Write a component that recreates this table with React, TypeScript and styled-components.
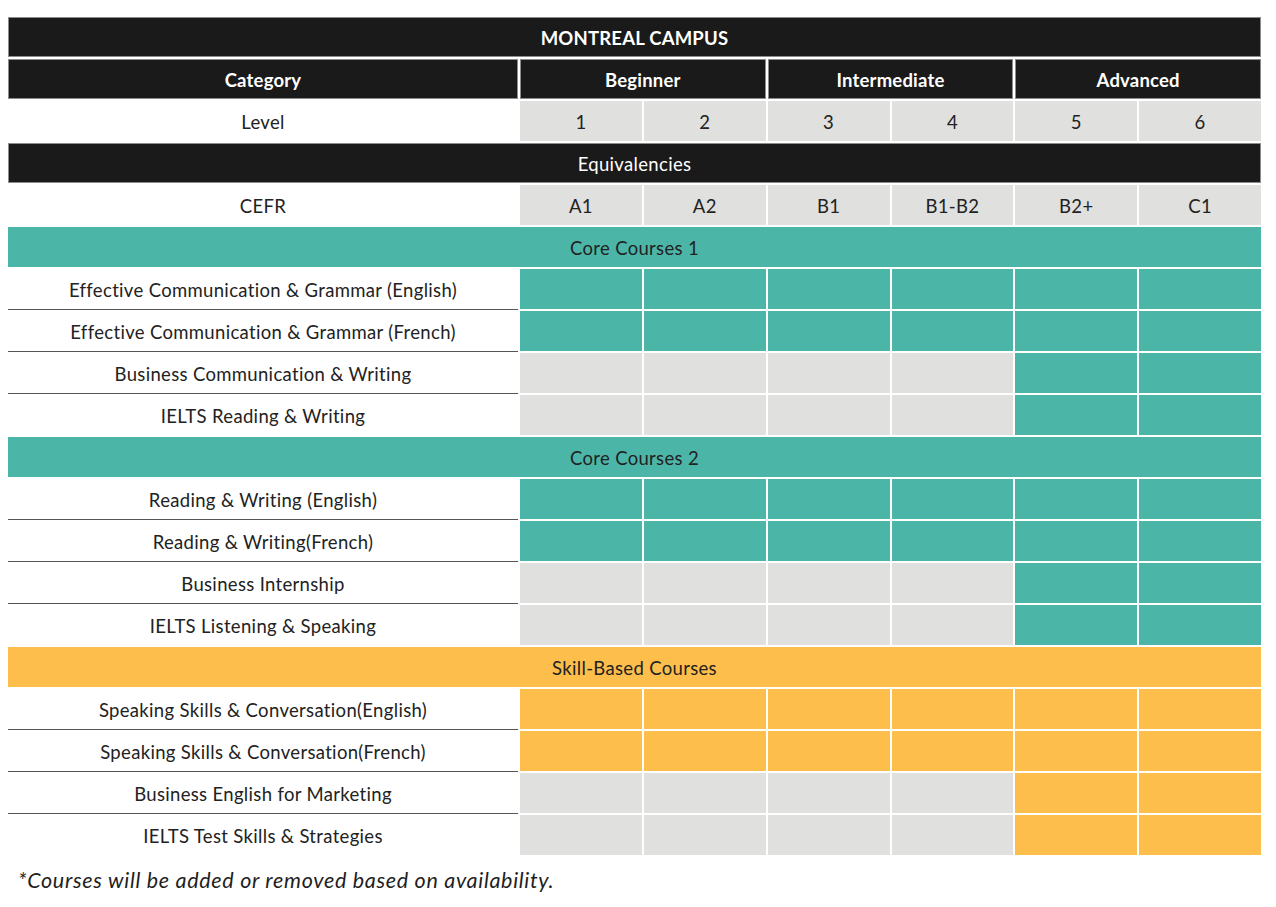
import React from 'react';
import styled, { createGlobalStyle } from 'styled-components';

const GlobalStyle = createGlobalStyle`
  html, body {
    margin: 0;
    padding: 0;
    background: #ffffff;
  }
  body {
    font-family: 'Lato', 'Open Sans', sans-serif;
    color: #222222;
  }
`;

type Tone = 'teal' | 'yellow' | 'gray';

const toneColors: Record<Tone, string> = {
  teal: '#4bb6a8',
  yellow: '#fdbe4c',
  gray: '#e0e0de',
};

const Page = styled.div`
  padding: 17px 15px 0 8px;
`;

const Table = styled.div`
  display: grid;
  grid-template-columns: 510px repeat(6, 1fr);
  grid-auto-rows: 40px;
  gap: 2px;
`;

const Cell = styled.div<{ $span?: number }>`
  grid-column: span ${(p) => p.$span || 1};
  display: flex;
  align-items: center;
  justify-content: center;
  padding-top: 1px;
  font-size: 18.5px;
  letter-spacing: 0.33px;
  box-sizing: border-box;
`;

const HeadCell = styled(Cell)<{ $bold?: boolean }>`
  background: #1a1a1a;
  border: 1px solid #8c8c8c;
  color: #ffffff;
  font-weight: ${(p) => (p.$bold ? 700 : 400)};
  letter-spacing: ${(p) => (p.$bold ? '0.2px' : '0.33px')};
`;

const BandCell = styled(Cell)<{ $tone: Tone }>`
  grid-column: 1 / -1;
  background: ${(p) => toneColors[p.$tone]};
  color: #222222;
`;

const LabelCell = styled(Cell)<{ $ruled?: boolean }>`
  background: #ffffff;
  box-shadow: ${(p) => (p.$ruled ? '0 1px 0 #555555' : 'none')};
`;

const LevelCell = styled(Cell)<{ $tone: Tone }>`
  background: ${(p) => toneColors[p.$tone]};
`;

const Footnote = styled.p`
  margin: 12px 0 0 10px;
  font-size: 21.5px;
  letter-spacing: 0.7px;
  font-style: italic;
  color: #1e1e1e;
`;

const levels = ['1', '2', '3', '4', '5', '6'];
const cefr = ['A1', 'A2', 'B1', 'B1-B2', 'B2+', 'C1'];

type Course = { name: string; from: number };
type Group = { title: string; tone: Tone; courses: Course[] };

const groups: Group[] = [
  {
    title: 'Core Courses 1',
    tone: 'teal',
    courses: [
      { name: 'Effective Communication & Grammar (English)', from: 0 },
      { name: 'Effective Communication & Grammar (French)', from: 0 },
      { name: 'Business Communication & Writing', from: 4 },
      { name: 'IELTS Reading & Writing', from: 4 },
    ],
  },
  {
    title: 'Core Courses 2',
    tone: 'teal',
    courses: [
      { name: 'Reading & Writing (English)', from: 0 },
      { name: 'Reading & Writing(French)', from: 0 },
      { name: 'Business Internship', from: 4 },
      { name: 'IELTS Listening & Speaking', from: 4 },
    ],
  },
  {
    title: 'Skill-Based Courses',
    tone: 'yellow',
    courses: [
      { name: 'Speaking Skills & Conversation(English)', from: 0 },
      { name: 'Speaking Skills & Conversation(French)', from: 0 },
      { name: 'Business English for Marketing', from: 4 },
      { name: 'IELTS Test Skills & Strategies', from: 4 },
    ],
  },
];

export default function App() {
  return (
    <Page>
      <GlobalStyle />
      <Table>
        <HeadCell $span={7} $bold>
          MONTREAL CAMPUS
        </HeadCell>
        <HeadCell $bold>Category</HeadCell>
        <HeadCell $span={2} $bold>
          Beginner
        </HeadCell>
        <HeadCell $span={2} $bold>
          Intermediate
        </HeadCell>
        <HeadCell $span={2} $bold>
          Advanced
        </HeadCell>

        <LabelCell>Level</LabelCell>
        {levels.map((l) => (
          <LevelCell key={l} $tone="gray">
            {l}
          </LevelCell>
        ))}

        <HeadCell $span={7}>Equivalencies</HeadCell>

        <LabelCell>CEFR</LabelCell>
        {cefr.map((c) => (
          <LevelCell key={c} $tone="gray">
            {c}
          </LevelCell>
        ))}

        {groups.map((g) => (
          <React.Fragment key={g.title}>
            <BandCell $tone={g.tone}>{g.title}</BandCell>
            {g.courses.map((c, i) => (
              <React.Fragment key={c.name}>
                <LabelCell $ruled={i < g.courses.length - 1}>{c.name}</LabelCell>
                {levels.map((l, j) => (
                  <LevelCell key={l} $tone={j >= c.from ? g.tone : 'gray'} />
                ))}
              </React.Fragment>
            ))}
          </React.Fragment>
        ))}
      </Table>
      <Footnote>*Courses will be added or removed based on availability.</Footnote>
    </Page>
  );
}
